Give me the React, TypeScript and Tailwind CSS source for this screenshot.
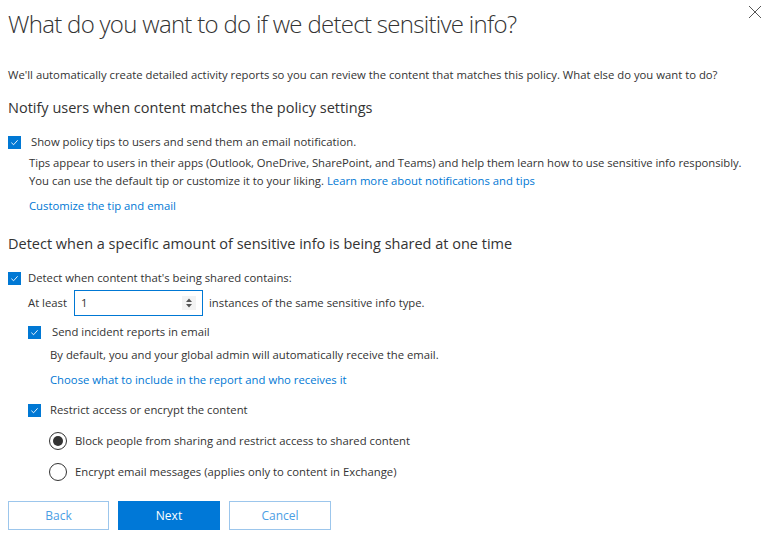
import { useState } from 'react'

function Check({ checked, onChange }: { checked: boolean; onChange: () => void }) {
  return (
    <button
      onClick={onChange}
      className={`flex h-[13px] w-[13px] shrink-0 items-center justify-center ${checked ? 'bg-[#0078d4]' : 'border border-[#666] bg-white'}`}
    >
      {checked && (
        <svg viewBox="0 0 10 10" className="h-[9px] w-[9px]">
          <path d="M1.5 5.2 L4 7.5 L8.5 2.5" fill="none" stroke="#fff" strokeWidth="1" />
        </svg>
      )}
    </button>
  )
}

function Radio({ checked, onClick }: { checked: boolean; onClick: () => void }) {
  return (
    <button
      onClick={onClick}
      className="flex h-[18px] w-[18px] shrink-0 items-center justify-center rounded-full border border-[#333] bg-white"
    >
      {checked && <span className="h-[10px] w-[10px] rounded-full bg-[#333]" />}
    </button>
  )
}

export default function App() {
  const [tips, setTips] = useState(true)
  const [detect, setDetect] = useState(true)
  const [incident, setIncident] = useState(true)
  const [restrict, setRestrict] = useState(true)
  const [mode, setMode] = useState<'block' | 'encrypt'>('block')
  const [count, setCount] = useState(1)

  return (
    <div className="relative h-[557px] w-[768px] bg-white font-['Open_Sans',sans-serif] text-[11.3px] text-[#333]">
      {/* Close */}
      <button className="absolute top-[5px] right-[6px] h-[14px] w-[14px]">
        <svg viewBox="0 0 14 14" className="h-[14px] w-[14px]">
          <path d="M1 1 L13 13 M13 1 L1 13" stroke="#555" strokeWidth="1" />
        </svg>
      </button>

      <div className="px-[8px] pt-[8px]">
        <h1 className="text-[24px] leading-[32px] font-light tracking-[-0.7px] text-[#333]">
          What do you want to do if we detect sensitive info?
        </h1>

        <p className="mt-[26px] leading-[18px]">
          We'll automatically create detailed activity reports so you can review the content that matches this policy. What else do you want to do?
        </p>

        {/* Notify section */}
        <h2 className="mt-[13px] text-[14.5px] leading-[22px]">Notify users when content matches the policy settings</h2>

        <div className="mt-[14px] flex h-[18px] items-center gap-[10px]">
          <Check checked={tips} onChange={() => setTips(!tips)} />
          <span className="leading-[18px]">Show policy tips to users and send them an email notification.</span>
        </div>
        <div className="ml-[21px] mt-[3px] leading-[18px]">
          <p className="whitespace-nowrap tracking-[-0.05px]">
            Tips appear to users in their apps (Outlook, OneDrive, SharePoint, and Teams) and help them learn how to use sensitive info responsibly.
          </p>
          <p>
            You can use the default tip or customize it to your liking.{' '}
            <a className="text-[#0078d4]">Learn more about notifications and tips</a>
          </p>
          <a className="mt-[7px] block text-[#0078d4]">Customize the tip and email</a>
        </div>

        {/* Detect section */}
        <h2 className="mt-[18px] text-[14.5px] leading-[22px]">Detect when a specific amount of sensitive info is being shared at one time</h2>

        <div className="mt-[14px] flex h-[18px] items-center gap-[7px]">
          <Check checked={detect} onChange={() => setDetect(!detect)} />
          <span className="leading-[18px]">Detect when content that's being shared contains:</span>
        </div>
        <div className="ml-[20px] mt-[3px] flex h-[26px] items-center">
          <span className="w-[46px]">At least</span>
          <div className="flex h-[26px] w-[129px] items-center border border-[#0078d4] bg-white pr-[6px] pl-[6px]">
            <input
              value={count}
              onChange={(e) => setCount(Number(e.target.value) || 0)}
              className="min-w-0 flex-1 bg-transparent text-[11.3px] outline-none"
            />
            <div className="flex h-[14px] w-[14px] flex-col items-center justify-center bg-[#f3f3f3]">
              <svg viewBox="0 0 8 12" className="h-[12px] w-[8px]">
                <path d="M1 5 L4 1.5 L7 5 Z M1 7 L4 10.5 L7 7 Z" fill="#555" />
              </svg>
            </div>
          </div>
          <span className="ml-[6px]">instances of the same sensitive info type.</span>
        </div>

        <div className="ml-[20px]">
          <div className="mt-[7px] flex h-[18px] items-center gap-[11px]">
            <Check checked={incident} onChange={() => setIncident(!incident)} />
            <span className="leading-[18px]">Send incident reports in email</span>
          </div>
          <div className="ml-[22px]">
            <p className="mt-[5px] leading-[18px]">By default, you and your global admin will automatically receive the email.</p>
            <a className="mt-[7px] block leading-[18px] text-[#0078d4]">Choose what to include in the report and who receives it</a>
          </div>

          <div className="mt-[12px] flex h-[18px] items-center gap-[9px]">
            <Check checked={restrict} onChange={() => setRestrict(!restrict)} />
            <span className="leading-[18px]">Restrict access or encrypt the content</span>
          </div>

          <div className="ml-[21px] mt-[13px] flex flex-col gap-[13px]">
            <div className="flex h-[18px] items-center gap-[8px]">
              <Radio checked={mode === 'block'} onClick={() => setMode('block')} />
              <span>Block people from sharing and restrict access to shared content</span>
            </div>
            <div className="flex h-[18px] items-center gap-[8px]">
              <Radio checked={mode === 'encrypt'} onClick={() => setMode('encrypt')} />
              <span>Encrypt email messages (applies only to content in Exchange)</span>
            </div>
          </div>
        </div>

        {/* Footer buttons */}
        <div className="mt-[20px] flex gap-[9px]">
          <button className="h-[29px] w-[101px] border border-[#9cc6ec] bg-white text-[12px] text-[#4a9ee4]">Back</button>
          <button className="h-[29px] w-[102px] bg-[#0078d7] text-[12px] text-white">Next</button>
          <button className="h-[29px] w-[102px] border border-[#9cc6ec] bg-white text-[12px] text-[#4a9ee4]">Cancel</button>
        </div>
      </div>
    </div>
  )
}
